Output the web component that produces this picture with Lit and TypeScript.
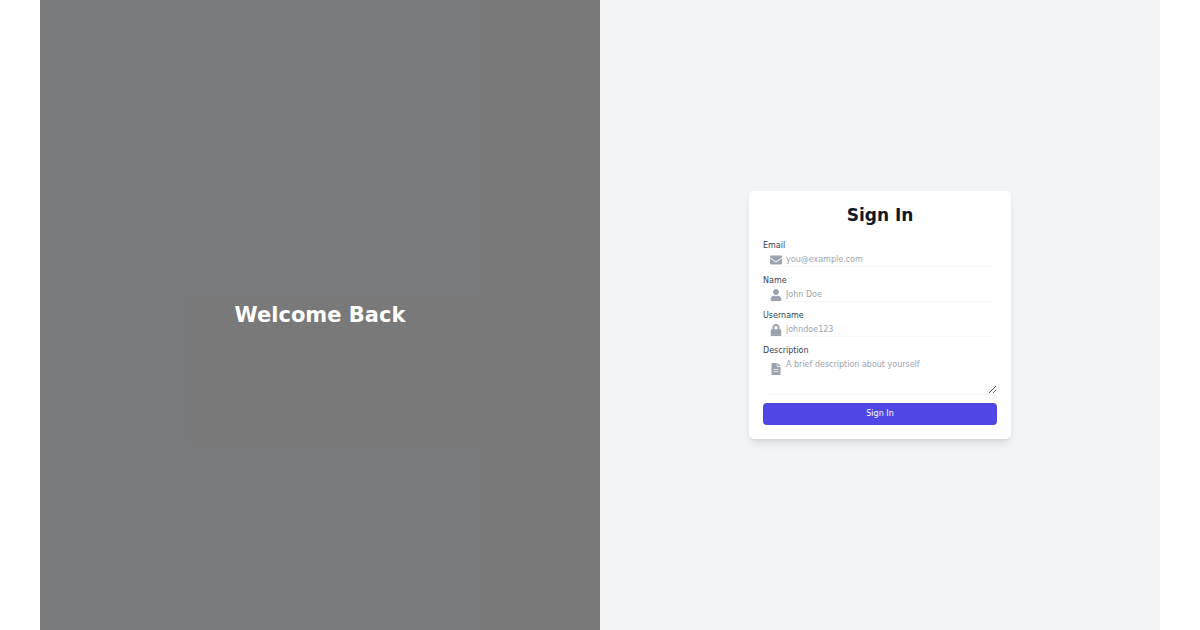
import { LitElement, html, css, svg } from "lit";
import { customElement } from "lit/decorators.js";

const icons = {
  envelope: svg`<path d="M48 64C21.5 64 0 85.5 0 112c0 15.1 7.1 29.3 19.2 38.4L236.8 313.6c11.4 8.5 27 8.5 38.4 0L492.8 150.4c12.1-9.1 19.2-23.3 19.2-38.4c0-26.5-21.5-48-48-48H48zM0 176V400c0 26.5 21.5 48 48 48H464c26.5 0 48-21.5 48-48V176L294.4 339.2c-22.8 17.1-54 17.1-76.8 0L0 176z"/>`,
  user: svg`<path transform="translate(32 0)" d="M224 256c70.7 0 128-57.3 128-128S294.7 0 224 0 96 57.3 96 128s57.3 128 128 128zm89.6 32h-16.7c-22.2 10.2-46.9 16-72.9 16s-50.6-5.8-72.9-16h-16.7C60.2 288 0 348.2 0 422.4V464c0 26.5 21.5 48 48 48h352c26.5 0 48-21.5 48-48v-41.6c0-74.2-60.2-134.4-134.4-134.4z"/>`,
  lock: svg`<path transform="translate(32 0)" d="M400 224h-24v-72C376 68.2 307.8 0 224 0S72 68.2 72 152v72H48c-26.5 0-48 21.5-48 48v192c0 26.5 21.5 48 48 48h352c26.5 0 48-21.5 48-48V272c0-26.5-21.5-48-48-48zm-104 0H152v-72c0-39.7 32.3-72 72-72s72 32.3 72 72v72z"/>`,
  file: svg`<path transform="translate(64 0)" d="M224 136V0H24C10.7 0 0 10.7 0 24v464c0 13.3 10.7 24 24 24h336c13.3 0 24-10.7 24-24V160H248c-13.2 0-24-10.8-24-24zm64 236c0 6.6-5.4 12-12 12H108c-6.6 0-12-5.4-12-12v-8c0-6.6 5.4-12 12-12h168c6.6 0 12 5.4 12 12v8zm0-84c0 6.6-5.4 12-12 12H108c-6.6 0-12-5.4-12-12v-8c0-6.6 5.4-12 12-12h168c6.6 0 12 5.4 12 12v8zm96-166.1v6.1H256V0h6.1c6.4 0 12.5 2.5 17 7l97.9 98c4.5 4.5 7 10.6 7 16.9z"/>`,
};

const fields = [
  { id: "email", label: "Email", type: "email", hint: "you@example.com", icon: icons.envelope },
  { id: "name", label: "Name", type: "text", hint: "John Doe", icon: icons.user },
  { id: "username", label: "Username", type: "text", hint: "johndoe123", icon: icons.lock },
];

@customElement("app-root")
export class AppRoot extends LitElement {
  static styles = css`
    :host {
      display: block;
      font-family: "DejaVu Sans", sans-serif;
      font-size: 8px;
      line-height: 12px;
      background: #fff;
    }
    * {
      box-sizing: border-box;
    }
    .page {
      display: grid;
      grid-template-columns: 1fr 1fr;
      min-height: 100vh;
      padding: 0 40px;
    }
    .hero,
    .panel {
      display: flex;
      align-items: center;
      justify-content: center;
    }
    .hero {
      background-color: #797a7c;
      background-image: linear-gradient(#7a7979, #7a7979), linear-gradient(#7a7979, #7a7979);
      background-size: 20.5% 100%, 53% 23.5%;
      background-position: 100% 0, 57% 61.6%;
      background-repeat: no-repeat;
    }
    .welcome {
      margin: 0;
      font-size: 21px;
      line-height: 24px;
      font-weight: 700;
      color: #fff;
    }
    .panel {
      background: #f3f4f6;
    }
    .card {
      display: flex;
      flex-direction: column;
      gap: 14px;
      width: 100%;
      max-width: 262px;
      padding: 14px;
      border-radius: 5px;
      background: #fff;
      box-shadow: 0 6px 9px -2px rgba(0, 0, 0, 0.1), 0 2px 4px -2px rgba(0, 0, 0, 0.1);
    }
    .title {
      margin: 0;
      font-size: 17px;
      line-height: 21px;
      font-weight: 700;
      text-align: center;
      color: #111827;
    }
    .form {
      display: flex;
      flex-direction: column;
      gap: 9px;
    }
    .field {
      display: flex;
      flex-direction: column;
      gap: 2px;
    }
    .label {
      color: #374151;
    }
    .box {
      display: flex;
      gap: 4px;
      padding-left: 7px;
      border-radius: 4px;
      background: #fff;
      box-shadow: 0 1px 1px rgba(0, 0, 0, 0.03);
    }
    .icon {
      flex: none;
      width: 12px;
      height: 12px;
      fill: #9ca3af;
    }
    .tall .icon {
      margin-top: 4px;
    }
    .control {
      flex: 1;
      min-width: 0;
      height: 12px;
      margin: 0;
      padding: 0;
      border: 0;
      outline: 0;
      background: none;
      font: inherit;
      color: #111827;
    }
    .tall .control {
      height: 35px;
      resize: vertical;
    }
    .control::placeholder {
      color: #9ca3af;
      opacity: 1;
    }
    .box:focus-within {
      box-shadow: 0 0 0 1px #6366f1;
    }
    .submit {
      padding: 5px 9px;
      border: 0;
      border-radius: 4px;
      background: #4f46e5;
      color: #fff;
      font: inherit;
      cursor: pointer;
    }
    .submit:hover {
      background: #4338ca;
    }
  `;

  private icon(shape: unknown) {
    return html`<svg class="icon" viewBox="0 0 512 512" aria-hidden="true">${shape}</svg>`;
  }

  render() {
    return html`
      <main class="page">
        <section class="hero"><h1 class="welcome">Welcome Back</h1></section>
        <section class="panel">
          <div class="card">
            <h2 class="title">Sign In</h2>
            <form class="form" @submit=${(e: Event) => e.preventDefault()}>
              ${fields.map(
                (f) => html`
                  <div class="field">
                    <label class="label" for=${f.id}>${f.label}</label>
                    <div class="box">
                      ${this.icon(f.icon)}
                      <input class="control" id=${f.id} name=${f.id} type=${f.type} placeholder=${f.hint} />
                    </div>
                  </div>
                `
              )}
              <div class="field">
                <label class="label" for="description">Description</label>
                <div class="box tall">
                  ${this.icon(icons.file)}
                  <textarea
                    class="control"
                    id="description"
                    name="description"
                    placeholder="A brief description about yourself"
                  ></textarea>
                </div>
              </div>
              <button class="submit" type="submit">Sign In</button>
            </form>
          </div>
        </section>
      </main>
    `;
  }
}
